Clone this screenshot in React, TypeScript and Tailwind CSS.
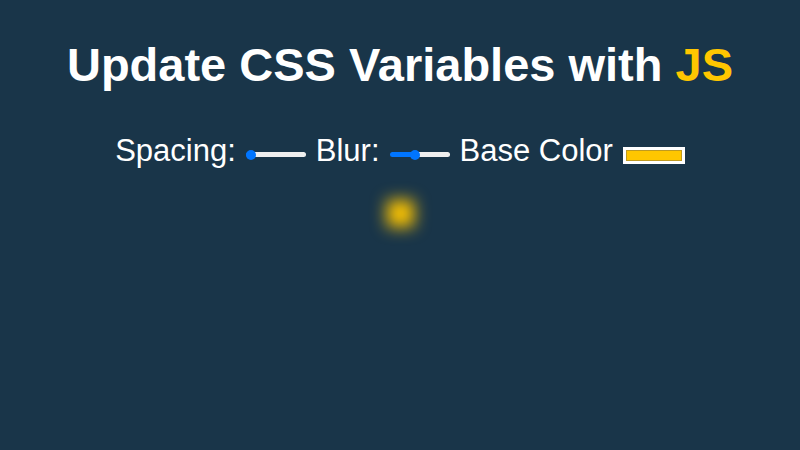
const sliderCls =
  "appearance-none w-[60px] h-[5px] rounded-full mt-[8px] outline-none [&::-webkit-slider-thumb]:appearance-none [&::-webkit-slider-thumb]:w-[10px] [&::-webkit-slider-thumb]:h-[10px] [&::-webkit-slider-thumb]:rounded-full [&::-webkit-slider-thumb]:bg-[#0075ff] [&::-webkit-slider-thumb]:border-0";

function Slider({ id, min, max, value }: { id: string; min: number; max: number; value: number }) {
  const frac = (value - min) / (max - min);
  const fill = ((5 + frac * 50) / 60) * 100;
  return (
    <input
      id={id}
      type="range"
      min={min}
      max={max}
      defaultValue={value}
      className={sliderCls}
      style={{ background: `linear-gradient(to right, #0075ff ${fill}%, #efefef ${fill}%)` }}
    />
  );
}

export default function App() {
  return (
    <div className="min-h-screen w-full bg-[#193549] text-white font-['Liberation_Sans',Arial,sans-serif] flex flex-col items-center pt-[41px]">
      <h2 className="text-[47px] font-bold leading-none">
        Update CSS Variables with <span className="text-[#ffc600]">JS</span>
      </h2>

      <div className="mt-[47px] flex items-center gap-[10px] text-[31px] leading-none">
        <label htmlFor="spacing">Spacing:</label>
        <Slider id="spacing" min={10} max={200} value={10} />
        <label htmlFor="blur">Blur:</label>
        <Slider id="blur" min={0} max={25} value={10} />
        <label htmlFor="base">Base Color</label>
        <div id="base" className="w-[62px] h-[17px] bg-white p-[3px] mt-[9px]">
          <div className="w-full h-full bg-[#ffc600] border border-[#c09a20]" />
        </div>
      </div>

      <div className="mt-[34px] w-[27px] h-[27px] bg-[#ffc600] blur-[8px]" />
    </div>
  );
}
